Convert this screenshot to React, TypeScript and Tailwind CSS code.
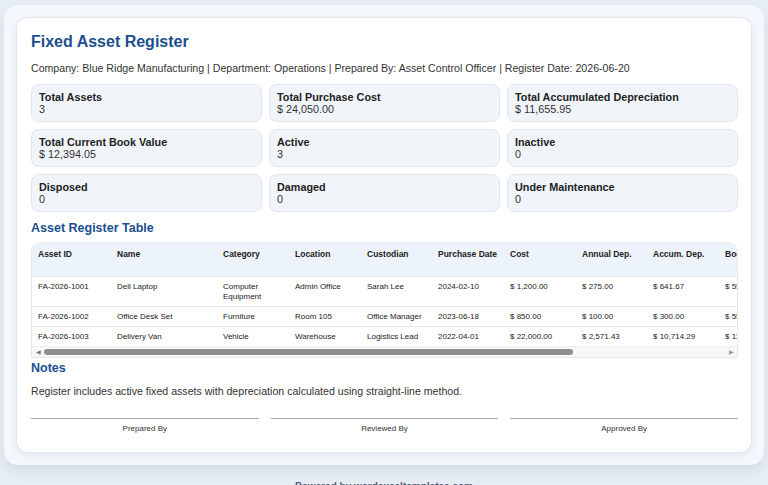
export default function App() {
  const cards = [
    ["Total Assets", "3"],
    ["Total Purchase Cost", "$ 24,050.00"],
    ["Total Accumulated Depreciation", "$ 11,655.95"],
    ["Total Current Book Value", "$ 12,394.05"],
    ["Active", "3"],
    ["Inactive", "0"],
    ["Disposed", "0"],
    ["Damaged", "0"],
    ["Under Maintenance", "0"],
  ];
  const cols = [
    ["Asset ID", 79], ["Name", 106], ["Category", 72], ["Location", 72], ["Custodian", 71],
    ["Purchase Date", 72], ["Cost", 72], ["Annual Dep.", 71], ["Accum. Dep.", 72],
    ["Book Value", 80], ["Status", 70], ["Condition", 80],
  ] as const;
  const rows = [
    ["FA-2026-1001", "Dell Laptop", "Computer Equipment", "Admin Office", "Sarah Lee", "2024-02-10", "$ 1,200.00", "$ 275.00", "$ 641.67", "$ 558.33", "Active", "Good"],
    ["FA-2026-1002", "Office Desk Set", "Furniture", "Room 105", "Office Manager", "2023-06-18", "$ 850.00", "$ 100.00", "$ 300.00", "$ 550.00", "Active", "Good"],
    ["FA-2026-1003", "Delivery Van", "Vehicle", "Warehouse", "Logistics Lead", "2022-04-01", "$ 22,000.00", "$ 2,571.43", "$ 10,714.29", "$ 11,285.71", "Active", "Good"],
  ];
  return (
    <div className="w-[768px] h-[485px] bg-[#e9eff6] overflow-hidden" style={{ fontFamily: "'Liberation Sans', Arial, sans-serif" }}>
      <div className="pt-[5px] px-[4px]">
        <div className="bg-[#f4f7fb] rounded-[14px] shadow-[0_6px_16px_rgba(100,120,150,0.18)] px-[12px] pt-[12px] pb-[12px]">
          <div className="bg-white rounded-[12px] border border-[#e1e7ef] shadow-[0_2px_6px_rgba(100,120,150,0.12)] pl-[14px] pr-[13px] pt-[14px] pb-[18px]">
            <h1 className="text-[16px] leading-[20px] font-bold text-[#1b4f8f]">Fixed Asset Register</h1>
            <p className="mt-[9px] text-[10.6px] leading-[14px] text-[#333]">Company: Blue Ridge Manufacturing | Department: Operations | Prepared By: Asset Control Officer | Register Date: 2026-06-20</p>
            <div className="mt-[9px] grid grid-cols-3 gap-[7px]">
              {cards.map(([l, v]) => (
                <div key={l} className="h-[38px] bg-[#f1f5fa] border border-[#e0e6ee] rounded-[8px] px-[7px] pt-[6px]">
                  <div className="text-[10.8px] leading-[12px] font-bold text-[#222]">{l}</div>
                  <div className="text-[10.8px] leading-[12px] text-[#333]">{v}</div>
                </div>
              ))}
            </div>
            <h2 className="mt-[8px] text-[12.5px] leading-[16px] font-bold text-[#1b4f8f]">Asset Register Table</h2>
            <div className="mt-[6px] border border-[#e3e9f0] rounded-t-[10px] overflow-hidden">
              <div className="overflow-hidden">
                <table className="border-collapse text-[8px] leading-[10px] text-[#222]" style={{ width: cols.reduce((a, c) => a + c[1], 0) }}>
                  <thead>
                    <tr className="bg-[#edf3fa] h-[33px] align-top">
                      {cols.map(([c, w]) => (
                        <th key={c} style={{ width: w }} className="text-left font-bold text-[8.5px] leading-[11px] px-[6px] pt-[6px] text-[#222]">{c}</th>
                      ))}
                    </tr>
                  </thead>
                  <tbody>
                    {rows.map((r, i) => (
                      <tr key={i} className={`border-t border-[#e3e9f0] align-top ${i === 0 ? "h-[30px]" : "h-[20px]"}`}>
                        {r.map((c, j) => (
                          <td key={j} className="px-[6px] pt-[5px] whitespace-pre-wrap">{j === 2 && i === 0 ? "Computer\nEquipment" : c}</td>
                        ))}
                      </tr>
                    ))}
                  </tbody>
                </table>
              </div>
              <div className="h-[11px] flex items-center bg-[#f7f7f7] border-t border-[#eee]">
                <span className="w-[12px] text-center text-[6px] text-[#777]">◀</span>
                <div className="w-[529px] h-[6px] rounded-full bg-[#8f8f8f]" />
                <div className="flex-1" />
                <span className="w-[12px] text-center text-[6px] text-[#999]">▶</span>
              </div>
            </div>
            <h2 className="mt-[2px] text-[12.5px] leading-[16px] font-bold text-[#1b4f8f]">Notes</h2>
            <p className="mt-[8px] text-[10.6px] leading-[14px] text-[#333]">Register includes active fixed assets with depreciation calculated using straight-line method.</p>
            <div className="mt-[20px] grid grid-cols-3 gap-[12px]">
              {["Prepared By", "Reviewed By", "Approved By"].map(s => (
                <div key={s} className="border-t-[1.5px] border-[#aaa] pt-[5px] text-center text-[8px] leading-[10px] text-[#333]">{s}</div>
              ))}
            </div>
          </div>
        </div>
      </div>
      <div className="mt-[14px] text-center text-[10px] font-bold text-[#4b5f7e]">Powered by wordexceltemplates.com</div>
    </div>
  );
}
